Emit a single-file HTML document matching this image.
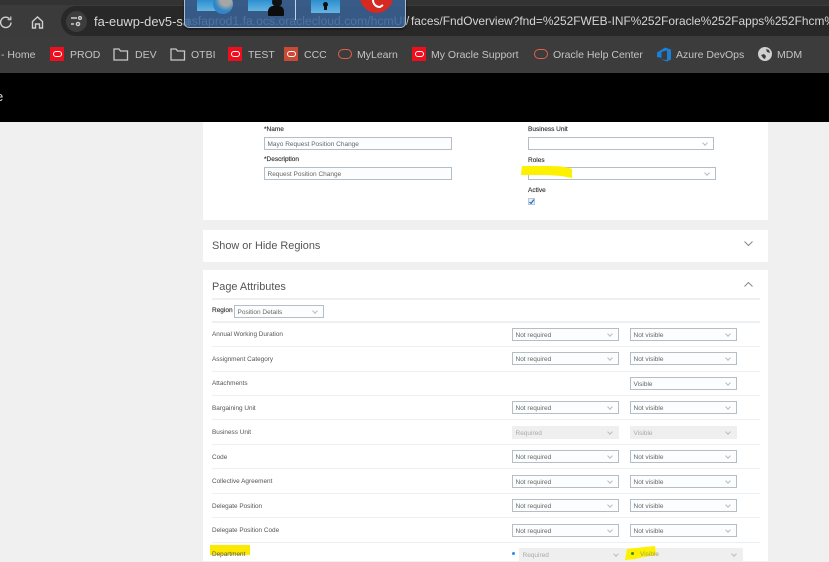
<!DOCTYPE html>
<html><head><meta charset="utf-8"><style>
html,body{margin:0;padding:0}
body{width:829px;height:561px;overflow:hidden;position:relative;background:#f0f0f0;font-family:"Liberation Sans",sans-serif}
div,span{position:absolute;white-space:nowrap;box-sizing:border-box}
svg{position:absolute}
.bm{top:48px;font-size:10.5px;line-height:15px;color:#c4c4c4;filter:blur(.25px)}
.o{width:14px;height:14px;top:47px;background:#f00d1c}
.o:after{content:"";position:absolute;left:2.5px;top:4px;width:9px;height:6px;border:1.6px solid #fff;border-radius:3.5px;box-sizing:border-box}
.r{width:14px;height:10px;top:49px;border:1.6px solid #e2604c;border-radius:5px}
.l{font-size:6.4px;line-height:10px;color:#555;filter:blur(.25px);left:212px}
.f{font-size:6.5px;line-height:10px;color:#333;filter:blur(.2px);-webkit-text-stroke:.15px #333}
.h{height:1px;background:#ecf0f3;left:212px;width:548px}
.s{height:13px;width:107px;border:1px solid #b3bec6;background:#fcfdfe;font-size:6.5px;line-height:13px;color:#666;padding-left:2.5px;filter:blur(.2px)}
.c:after{content:"";position:absolute;right:6px;top:3px;width:3px;height:3px;border-right:.7px solid #bbb;border-bottom:.7px solid #bbb;transform:rotate(45deg)}
.a{left:512px}.b{left:630px}
.d{background:#efeff0;border-color:#efeff0;color:#aaa}
.t{left:212px;font-size:10.9px;line-height:14px;color:#555;filter:blur(.25px)}
.u{top:13px;line-height:17px;color:#d6d6d6;filter:blur(.2px)}
</style></head><body>
<!-- browser chrome -->
<div style="left:0;top:0;width:829px;height:5px;background:#333"></div>
<div style="left:0;top:5px;width:829px;height:31px;background:#3b3b3b"></div>
<div style="left:0;top:36px;width:829px;height:37px;background:#3c3c3c"></div>
<div style="left:61px;top:6px;width:768px;height:30px;background:#282828;border-radius:15px 0 0 15px"></div>
<div style="left:66px;top:11px;width:21px;height:21px;background:#3d3d3d;border-radius:50%"></div>
<svg style="left:0;top:0" width="100" height="40" fill="none" stroke="#cfcfcf" stroke-width="1.4">
<path d="M11 22.500a5.200 5.200 0 1 1-1.500-3.800"/><path d="M10.800 16.500v3.200H7.600" stroke-width="1.200"/>
<path d="M32.500 28v-6.500l5-4.500 5 4.500V28h-3v-4h-4v4z"/>
<path d="M71 18h6M71 24h3"/><circle cx="80" cy="18" r="1.400"/><circle cx="78" cy="24" r="1.600"/>
</svg>
<div class="u" style="left:94px;font-size:12.9px">fa-euwp-dev5-sa</div>
<div class="u" style="left:185px;font-size:12.2px">asfaprod1.fa.ocs.oraclecloud.com/hcmUI/</div>
<div class="u" style="left:411px;width:418px;height:17px;overflow:hidden;font-size:11.9px">faces/FndOverview?fnd=%252FWEB-INF%252Foracle%252Fapps%252Fhcm%</div>
<!-- overlay -->
<div style="left:184px;top:0;width:222px;height:28px;overflow:hidden;background:rgba(58,98,150,.86);border:1px solid #a9bed3;border-top:0;border-radius:0 0 5px 5px;box-shadow:0 1px 2px #111">
<div style="left:12px;top:0;width:32px;height:11px;background:linear-gradient(#2d8fcf,#65b5e2)"></div>
<div style="left:28px;top:-6px;width:20px;height:20px;border-radius:50%;background:radial-gradient(circle at 65% 30%,#a6a6a6 30%,#2f86c8 58%)"></div>
<div style="left:63px;top:0;width:32px;height:11px;background:linear-gradient(#2d8fcf,#65b5e2)"></div>
<div style="left:87px;top:-3px;width:10px;height:10px;border-radius:50%;background:#111"></div>
<div style="left:83px;top:6px;width:16px;height:10px;border-radius:5px 5px 1px 1px;background:#0c0c0c"></div>
<div style="left:110px;top:0;width:1px;height:20px;background:#c6d4e2"></div>
<div style="left:126px;top:0;width:29px;height:13px;background:linear-gradient(#2d8fcf,#65b5e2)"></div>
<div style="left:138px;top:2px;width:5px;height:5px;border-radius:50%;background:#111"></div>
<div style="left:139px;top:5px;width:3px;height:5px;background:#111"></div>
<div style="left:175px;top:-20px;width:33px;height:33px;border-radius:50%;background:#d42a22"></div>
<svg style="left:175px;top:0" width="33" height="13" fill="none" stroke="#fff" stroke-width="2"><path d="M13 0c0 4 3 7 7 7l3-2"/></svg>
</div>
<!-- bookmarks -->
<div class="bm" style="left:1px">- Home</div>
<div class="o" style="left:50px"></div><div class="bm" style="left:70px">PROD</div>
<svg style="left:113px;top:47px" width="16" height="14" fill="none" stroke="#c8c8c8" stroke-width="1.300"><path d="M1 2h5l1.500 2H14.500v9H1z"/></svg><div class="bm" style="left:135px">DEV</div>
<svg style="left:170px;top:47px" width="16" height="14" fill="none" stroke="#c8c8c8" stroke-width="1.300"><path d="M1 2h5l1.500 2H14.500v9H1z"/></svg><div class="bm" style="left:191px">OTBI</div>
<div class="o" style="left:228px"></div><div class="bm" style="left:248px">TEST</div>
<div class="o" style="left:284px;background:#c94a36"></div><div class="bm" style="left:304px">CCC</div>
<div class="r" style="left:338px"></div><div class="bm" style="left:357px">MyLearn</div>
<div class="o" style="left:412px"></div><div class="bm" style="left:431px">My Oracle Support</div>
<div class="r" style="left:534px"></div><div class="bm" style="left:553px">Oracle Help Center</div>
<svg style="left:656px;top:47px" width="16" height="15"><path d="M15 2.500v10l-4 2-6.500-2.300 6.500.8V3.500L5.500 5v6L1 10V5.500L9 .5z" fill="#1c7fd6"/></svg><div class="bm" style="left:676px">Azure DevOps</div>
<div style="left:758px;top:47px;width:14px;height:14px;border-radius:50%;background:#d0d0d0"></div>
<svg style="left:758px;top:47px" width="14" height="14" fill="#3c3c3c"><path d="M3 8l3-1 2 2-1 3-2-1zM8 2l3 1 1 3-3-1z"/></svg><div class="bm" style="left:777px">MDM</div>
<!-- black band -->
<div style="left:0;top:73px;width:829px;height:49px;background:#000"></div>
<div style="left:0;top:89px;width:5px;height:16px;overflow:hidden"><span style="left:-4px;top:0;font-size:13px;line-height:16px;color:#ddd">e</span></div>
<!-- cards -->
<div style="left:203px;top:122px;width:565px;height:98px;background:#fff"></div>
<div style="left:203px;top:230px;width:565px;height:32px;background:#fff"></div>
<div style="left:203px;top:270px;width:565px;height:291px;background:#fff"></div>
<!-- form -->
<div class="f" style="left:264px;top:125px">*Name</div>
<div class="s" style="left:264px;top:137px;width:188px">Mayo Request Position Change</div>
<div class="f" style="left:264px;top:155px">*Description</div>
<div class="s" style="left:264px;top:167px;width:188px">Request Position Change</div>
<div class="f" style="left:528px;top:125px">Business Unit</div>
<div class="s c" style="left:528px;top:137px;width:186px;background:#fff"></div>
<div class="f" style="left:528px;top:156px">Roles</div>
<div class="s c" style="left:528px;top:167px;width:188px;background:#fff"></div>
<svg style="left:520px;top:164px" width="54" height="16"><path d="M2 2 L30 2 Q45 2 52 5 L52 14 Q40 11 22 11 L1 11z" fill="#fdf000"/></svg>
<div class="f" style="left:528px;top:186px">Active</div>
<div style="left:528px;top:198px;width:7px;height:7px;background:#e9eff6;border:1px solid #bcc8d4"></div>
<svg style="left:528px;top:198px" width="8" height="8" fill="none" stroke="#1b6ed0" stroke-width="1.200"><path d="M1.500 4l1.500 1.500L6 1.500"/></svg>
<!-- section headers -->
<div class="t" style="top:239px">Show or Hide Regions</div>
<svg style="left:744px;top:241px" width="9" height="6" fill="none" stroke="#888"><path d="M.5.500l4 4 4-4"/></svg>
<div class="t" style="top:280px">Page Attributes</div>
<svg style="left:744px;top:282px" width="9" height="6" fill="none" stroke="#888"><path d="M.5 4.500l4-4 4 4"/></svg>
<div class="h" style="top:298px;height:2px"></div>
<div class="f" style="left:212px;top:306px">Region</div>
<div class="s c" style="left:234px;top:305px;width:90px;height:13px">Position Details</div>
<div class="h" style="top:321px;height:2px"></div>
<!-- rows -->
<div class="l" style="top:330px">Annual Working Duration</div>
<div class="s c a" style="top:328px">Not required</div><div class="s c b" style="top:328px">Not visible</div>
<div class="h" style="top:346px"></div>
<div class="l" style="top:355px">Assignment Category</div>
<div class="s c a" style="top:352px">Not required</div><div class="s c b" style="top:352px">Not visible</div>
<div class="h" style="top:371px"></div>
<div class="l" style="top:379px">Attachments</div>
<div class="s c b" style="top:377px">Visible</div>
<div class="h" style="top:395px"></div>
<div class="l" style="top:404px">Bargaining Unit</div>
<div class="s c a" style="top:401px">Not required</div><div class="s c b" style="top:401px">Not visible</div>
<div class="h" style="top:419px"></div>
<div class="l" style="top:428px">Business Unit</div>
<div class="s c a d" style="top:426px">Required</div><div class="s c b d" style="top:426px">Visible</div>
<div class="h" style="top:444px"></div>
<div class="l" style="top:453px">Code</div>
<div class="s c a" style="top:450px">Not required</div><div class="s c b" style="top:450px">Not visible</div>
<div class="h" style="top:468px"></div>
<div class="l" style="top:477px">Collective Agreement</div>
<div class="s c a" style="top:475px">Not required</div><div class="s c b" style="top:475px">Not visible</div>
<div class="h" style="top:493px"></div>
<div class="l" style="top:502px">Delegate Position</div>
<div class="s c a" style="top:499px">Not required</div><div class="s c b" style="top:499px">Not visible</div>
<div class="h" style="top:517px"></div>
<div class="l" style="top:526px">Delegate Position Code</div>
<div class="s c a" style="top:524px">Not required</div><div class="s c b" style="top:524px">Not visible</div>
<div class="h" style="top:542px"></div>
<div style="left:210px;top:545px;width:40px;height:10px;background:#fde800"></div>
<div class="l" style="top:550px">Department</div>
<div style="left:512px;top:552px;width:3px;height:3px;border-radius:50%;background:#2a8cf0"></div>
<div class="s c d" style="left:519px;top:548px;width:106px">Required</div>
<div class="s c d" style="left:625px;top:548px;width:118px"></div>
<svg style="left:625px;top:546px" width="32" height="15"><path d="M2 3 L30 0 L31 9 Q18 11 10 13 L0 14z" fill="#fdf000"/></svg>
<div style="left:631px;top:552px;width:3px;height:3px;border-radius:50%;background:#3c8a00"></div>
<div style="left:640px;top:549px;font-size:6.5px;line-height:12px;color:#a5a55a;filter:blur(.2px)">Visible</div>
</body></html>
